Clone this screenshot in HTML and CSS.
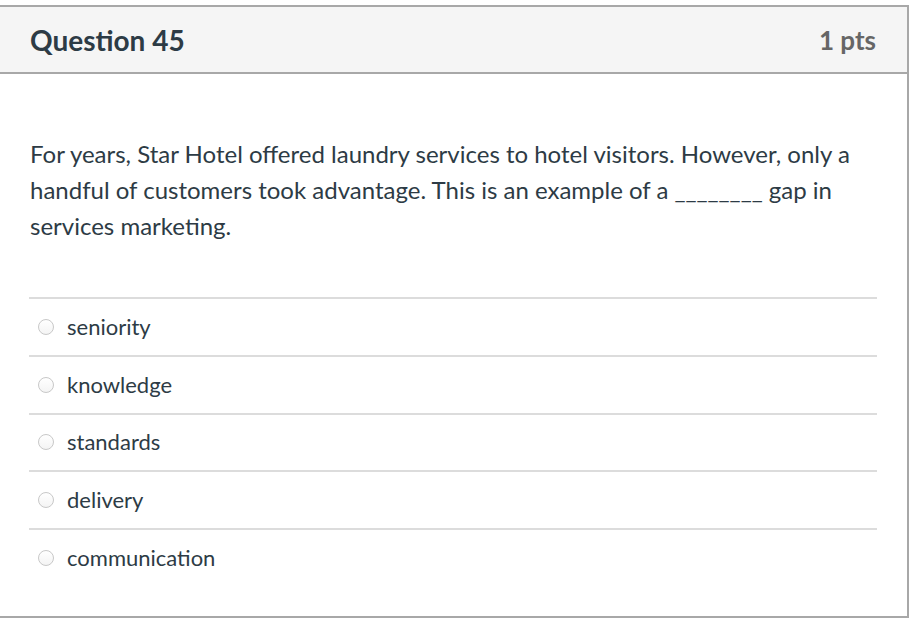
FILE: index.html
```html
<!DOCTYPE html>
<html lang="en">
<head>
<meta charset="utf-8">
<title>Question 45</title>
<link rel="stylesheet" href="styles.css">
</head>
<body>
<div class="question">
  <div class="header">
    <h2 class="title">Question 45</h2>
    <span class="pts">1 pts</span>
  </div>
  <div class="content">
    <p class="text">For years, Star Hotel offered laundry services to hotel visitors. However, only a handful of customers took advantage. This is an example of a ________ gap in services marketing.</p>
    <div class="answers">
      <label class="answer"><span class="radio"></span><span class="label">seniority</span></label>
      <label class="answer"><span class="radio"></span><span class="label">knowledge</span></label>
      <label class="answer"><span class="radio"></span><span class="label">standards</span></label>
      <label class="answer"><span class="radio"></span><span class="label">delivery</span></label>
      <label class="answer"><span class="radio"></span><span class="label">communication</span></label>
    </div>
  </div>
</div>
</body>
</html>
```
FILE: styles.css
```css
html, body {
  margin: 0;
  padding: 0;
  background: #ffffff;
}
body {
  font-family: Lato, "Open Sans", sans-serif;
  color: #2d3b45;
}
.question {
  margin-top: 5px;
  width: 907px;
  border: 2px solid #a8a8a8;
  border-left: none;
  background: #fff;
}
.header {
  height: 65px;
  background: #f5f5f5;
  border-bottom: 2px solid #a8a8a8;
  display: flex;
  align-items: center;
  justify-content: space-between;
  padding: 0 31px 0 30px;
}
.title {
  margin: 0;
  font-size: 28px;
  font-weight: 700;
  color: #2d3b45;
}
.pts {
  font-size: 26px;
  font-weight: 700;
  color: #666666;
}
.content {
  padding: 62px 30px 30px 29px;
}
.text {
  margin: 0 0 53px 1px;
  font-size: 24px;
  line-height: 36px;
}
.answer {
  display: flex;
  align-items: center;
  border-top: 2px solid #dcdcdc;
  padding: 13.875px 0;
  line-height: 28px;
  font-size: 22px;
}
.radio {
  width: 14px;
  height: 14px;
  border: 1px solid #c8c8c8;
  border-radius: 50%;
  margin-left: 9px;
  margin-right: 13px;
  background: linear-gradient(#ffffff, #f4f4f4);
  flex: none;
}
```
